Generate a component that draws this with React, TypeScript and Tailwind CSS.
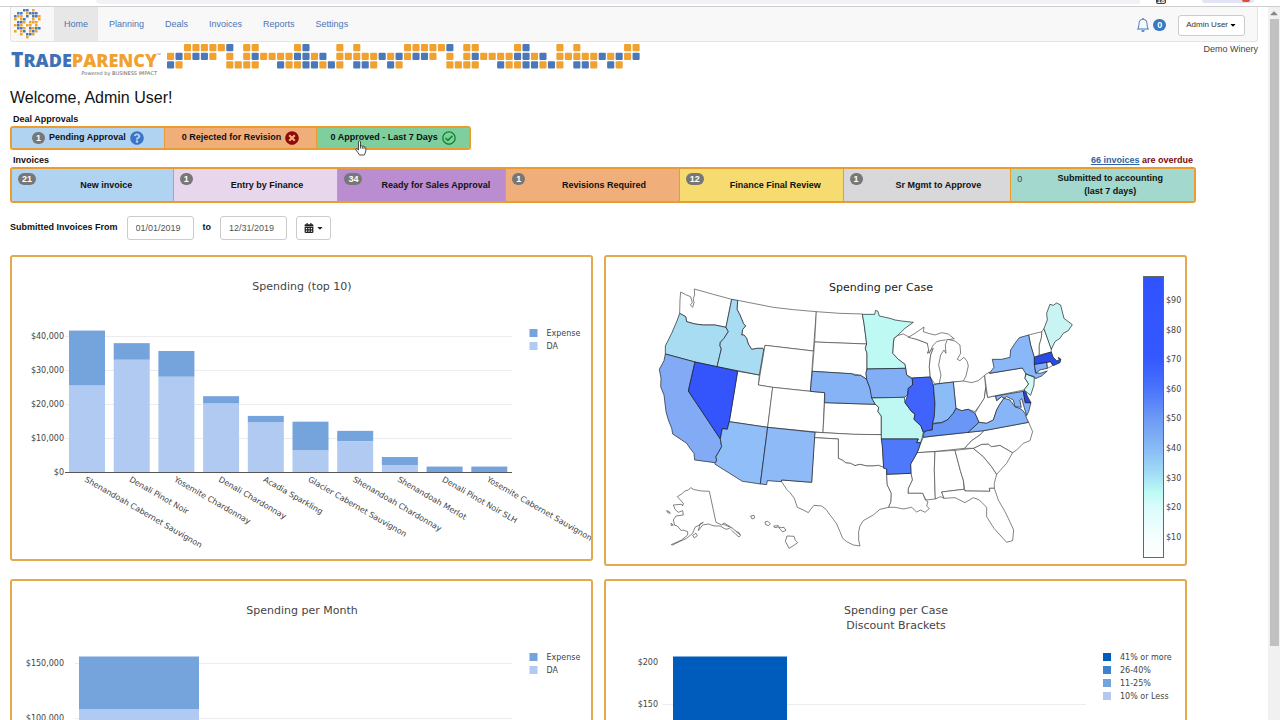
import { useState } from "react";
import { BsBell } from "react-icons/bs";
import {
  FaCalendarAlt,
  FaCaretDown,
  FaCaretUp,
  FaQuestionCircle,
  FaRegCheckCircle,
  FaTimesCircle,
} from "react-icons/fa";

const ORANGE = "#f0a12f";
const BLUE = "#4a78b8";
const EXPENSE = "#75a4dc";
const DA = "#b0caf1";

const navItems = ["Home", "Planning", "Deals", "Invoices", "Reports", "Settings"];

const bannerRows = [
  "..OOOOOB.OO....OB...O.O.....OOOOOB.OO....OB...O.O.....OO",
  "OBOBBO.O.OBOOOOBBOB.OOOOOBOBOBBO.O.OBOOOOBBOB.OOOOOBOBOB",
  "BO.....OOOO..BOOBBOBO.BBO.BO.....OOOO..BOOBBOBO.BBO.BO..",
];

const markRows = [
  "...BB.O..",
  ".BB.OBBB.",
  "BOO.B.BBO",
  "O.OB..O.O",
  ".BBO.OOO.",
  "OBO.OO.O.",
  ".BBO.BOBB",
  "O.OB.OBO.",
  "..O.BBO..",
  "....O....",
];

const invoiceStages = [
  { count: 21, label: "New invoice", color: "bg-[#afd3f0]" },
  { count: 1, label: "Entry by Finance", color: "bg-[#e8d6ec]" },
  { count: 34, label: "Ready for Sales Approval", color: "bg-[#b98dd0]" },
  { count: 1, label: "Revisions Required", color: "bg-[#f0ae7b]" },
  { count: 12, label: "Finance Final Review", color: "bg-[#f5db70]" },
  { count: 1, label: "Sr Mgmt to Approve", color: "bg-[#d8d8db]" },
  { count: 0, label: "Submitted to accounting\n(last 7 days)", color: "bg-[#a2d8cd]" },
];

const topSpending = [
  { name: "Shenandoah Cabernet Sauvignon", total: 41600, da: 25400 },
  { name: "Denali Pinot Noir", total: 37900, da: 33000 },
  { name: "Yosemite Chardonnay", total: 35600, da: 28000 },
  { name: "Denali Chardonnay", total: 22300, da: 20100 },
  { name: "Acadia Sparkling", total: 16500, da: 14700 },
  { name: "Glacier Cabernet Sauvignon", total: 14800, da: 6300 },
  { name: "Shenandoah Chardonnay", total: 12100, da: 9000 },
  { name: "Shenandoah Merlot", total: 4400, da: 1900 },
  { name: "Denali Pinot Noir SLH", total: 1600, da: 0 },
  { name: "Yosemite Cabernet Sauvignon", total: 1600, da: 0 },
];

interface StateShape {
  id: string;
  d: string;
  fill?: string;
}

const westStates: StateShape[] = [
  { id: "WA", d: "M122,66 L120,90 119,130 137,140 140,155 165,162 190,165 225,165 258,172 275,88 220,73 163,57 164,75 160,85 162,98 158,112 151,105 157,98 152,80 137,74Z" },
  { id: "MT", d: "M293,91 L400,112 460,119 529,125 520,243 375,226 371,240 368,235 352,235 335,238 325,222 320,205 312,195 305,195 308,178 317,168 310,160 300,135 291,118Z" },
  { id: "WY", d: "M375,226 L520,243 511,364 398,352 355,345Z" },
  { id: "UT", d: "M293,304 L358,315 355,345 398,352 383,472 268,455Z" },
  { id: "CO", d: "M398,352 L511,364 554,368 549,488 383,472Z" },
  { id: "ND", d: "M529,125 L600,130 667,132 672,160 676,190 680,222 600,219 524,216Z" },
  { id: "SD", d: "M524,216 L600,219 680,222 676,235 681,250 681,295 678,310 680,328 662,316 640,312 600,309 517,304Z" },
  { id: "KS", d: "M554,398 L640,401 706,403 716,412 714,425 724,438 724,494 640,493 549,488Z" },
  { id: "OK", d: "M525,487 L549,488 640,493 724,494 727,520 731,592 715,586 700,588 680,588 660,583 645,587 632,580 618,579 608,571 595,565 595,507 523,503Z" },
  { id: "TX", d: "M523,503 L595,507 595,565 608,571 618,579 632,580 645,587 660,583 680,588 700,588 715,586 731,592 740,597 740,612 742,645 754,670 753,695 746,712 720,718 700,735 670,752 660,768 656,785 656,810 660,828 640,825 620,815 608,805 600,785 590,762 580,748 570,735 558,718 545,708 522,706 512,718 505,728 490,720 472,712 463,685 450,668 440,658 425,635 425,630 515,637Z" },
  { id: "OR", fill: "#a8dcf3", d: "M119,130 L137,140 140,155 165,162 190,165 225,165 258,172 265,185 252,205 241,217 240,227 244,237 231,290 165,276 76,252 76,228 95,190 112,150Z" },
  { id: "ID", fill: "#a8dcf3", d: "M275,88 L293,91 291,118 300,135 310,160 317,168 308,178 305,195 312,195 320,205 325,222 335,238 352,235 368,235 371,240 358,315 231,290 244,237 240,227 241,217 252,205 265,185 258,172Z" },
  { id: "CA", fill: "#83abf5", d: "M76,252 L165,276 145,363 241,507 245,530 235,548 228,560 230,572 224,578 164,570 162,550 150,535 140,520 125,510 98,492 95,475 85,450 78,425 72,375 62,350 63,325 58,298 72,272Z" },
  { id: "NV", fill: "#3355fb", d: "M165,276 L231,290 293,304 268,455 262,478 247,476 241,507 145,363Z" },
  { id: "AZ", fill: "#90bef8", d: "M268,455 L383,472 361,642 307,634 224,582 230,572 228,560 235,548 245,530 241,507 247,476 262,478Z" },
  { id: "NM", fill: "#8fbaf8", d: "M383,472 L525,487 515,637 425,630 424,635 382,632 380,644 361,642Z" },
  { id: "NE", fill: "#85b3f6", d: "M517,304 L600,309 635,311 645,316 662,316 680,328 690,355 697,385 706,403 640,401 554,398 554,368 511,364Z" },
];

const eastStates: StateShape[] = [
  { id: "WI", d: "M172,197 L190,192 205,200 230,208 262,220 268,235 262,250 280,235 272,255 268,290 271,321 217,324 200,315 197,295 195,283 175,268 158,250 160,220 162,205Z" },
  { id: "MI-U", d: "M205,202 L225,190 252,171 250,185 265,190 285,195 305,188 325,192 332,198 343,206 320,210 305,211 290,215 278,228 268,250 262,220 230,208Z" },
  { id: "MI-L", d: "M322,208 L345,213 360,225 362,250 352,268 360,272 372,262 382,275 385,288 378,318 370,334 340,336 285,342 276,330 271,321 268,290 272,255 280,235 M298,340 L303,315 296,285 302,255 312,240 318,250 316,225 322,208" },
  { id: "OH", d: "M340,336 L370,333 395,338 415,332 434,316 437,355 433,385 420,405 405,425 385,418 365,422 348,415Z" },
  { id: "WV", d: "M437,355 L443,382 467,378 470,392 485,380 492,385 478,405 470,420 460,450 440,460 417,457 405,430 420,405 433,385Z" },
  { id: "PA", d: "M434,316 L448,306 450,310 547,294 558,305 555,325 566,342 552,360 443,382Z" },
  { id: "VT", d: "M566,195 L606,185 604,205 598,225 598,255 583,262 572,225Z" },
  { id: "NH", d: "M606,185 L612,176 634,235 634,246 598,255 598,225 604,205Z" },
  { id: "RI", d: "M620,277 L632,275 638,287 622,295Z" },
  { id: "TN", d: "M250,502 L385,487 432,482 420,495 395,512 374,535 280,545 232,548 242,520Z" },
  { id: "MS", d: "M232,548 L285,545 283,600 286,687 258,690 248,670 204,670 205,655 217,630 213,610 212,582 225,560Z" },
  { id: "AL", d: "M285,545 L345,541 362,605 370,630 372,658 305,666 312,685 302,680 286,687 283,600Z" },
  { id: "GA", d: "M345,541 L400,535 430,560 455,590 470,613 463,640 463,655 448,655 450,664 375,663 370,630 362,605Z" },
  { id: "FL", d: "M305,666 L372,658 375,663 450,664 448,655 463,655 475,690 495,725 505,745 521,780 518,812 500,817 480,795 462,775 440,740 440,712 418,690 400,683 375,698 345,683 312,685Z" },
  { id: "SC", d: "M400,535 L425,523 445,522 455,530 480,526 518,548 500,580 470,613 455,590 430,560Z" },
  { id: "NC", d: "M432,482 L566,457 578,485 570,512 550,520 530,540 518,548 480,526 455,530 445,522 425,523 400,535 374,535 395,512 420,495Z" },
  { id: "LA", d: "M140,613 L213,610 217,630 205,655 204,670 248,670 256,690 264,695 260,708 268,716 255,727 242,720 230,726 215,712 190,717 165,712 146,712 153,695 154,670 142,645Z" },
  { id: "MN", fill: "#bff9f3", d: "M67,133 L104,133 107,121 114,124 118,138 150,145 165,150 185,153 220,157 195,175 172,197 162,205 160,220 158,250 175,268 195,283 197,295 81,297 81,250 76,235 80,222 76,190 72,160Z" },
  { id: "IA", fill: "#82aef5", d: "M81,297 L197,295 200,315 217,327 218,345 205,355 203,375 193,382 95,384 90,355 80,328 78,310Z" },
  { id: "MO", fill: "#bff8f3", d: "M95,384 L193,382 195,398 215,425 225,432 222,448 243,468 250,487 247,502 242,518 230,518 235,507 124,507 124,438 114,425 116,412 106,403Z" },
  { id: "AR", fill: "#4f79fb", d: "M124,507 L235,507 230,518 242,518 235,540 225,560 212,582 213,610 140,613 140,597 131,595 127,530Z" },
  { id: "IL", fill: "#3f63fb", d: "M217,324 L271,321 280,345 285,400 283,440 278,462 277,480 262,482 250,487 243,468 222,448 225,432 215,425 195,398 203,375 205,355 218,345Z" },
  { id: "IN", fill: "#8cbcf8", d: "M280,345 L290,342 340,336 348,415 340,430 322,450 305,458 278,460 283,440 285,400Z" },
  { id: "KY", fill: "#6a97f7", d: "M278,462 L305,458 322,450 340,430 348,415 365,422 385,418 405,430 417,457 385,487 280,498 250,502 252,487 262,482 277,480Z" },
  { id: "VA", fill: "#88b5f7", d: "M385,487 L417,457 440,460 460,450 470,420 478,405 492,385 510,390 525,410 545,418 555,430 560,445 566,457 432,482Z" },
  { id: "MD", fill: "#86b2f6", d: "M467,378 L550,364 556,398 573,398 566,425 560,437 552,410 545,385 540,392 544,412 525,410 520,390 500,380 492,385 485,380 470,392Z" },
  { id: "DE", fill: "#2d45e0", d: "M550,364 L556,360 562,378 573,398 556,398Z" },
  { id: "NJ", fill: "#d3f9f7", d: "M558,312 L583,322 582,345 572,376 562,368 552,360 566,342 555,325Z" },
  { id: "NY", fill: "#89b7f7", d: "M448,310 L462,292 457,268 485,268 510,262 512,240 525,220 538,203 566,195 572,225 583,262 586,308 600,310 622,303 605,318 586,326 583,320 558,312 547,294Z" },
  { id: "CT", fill: "#82aef5", d: "M583,283 L620,277 622,295 600,300 588,310Z" },
  { id: "MA", fill: "#2b4be8", d: "M583,262 L634,246 640,262 650,272 658,270 655,262 663,268 660,278 640,287 632,275 583,283Z" },
  { id: "ME", fill: "#c8f5f3", d: "M612,176 L622,150 620,130 630,103 640,106 650,99 662,105 672,145 697,164 685,182 670,190 660,205 645,215 634,238Z" },
];

const islands = [
  "M152,653 L162,659 185,663 208,664 228,757 245,765 253,759 270,770 285,783 297,788 302,796 297,801 287,793 270,775 258,778 240,768 222,768 205,762 188,765 175,782 180,762 190,757 178,765 165,772 158,790 140,805 118,815 98,825 94,824 125,810 143,795 143,785 128,780 125,783 112,768 104,766 100,750 108,738 130,735 128,722 115,727 105,718 100,705 125,703 128,708 130,700 112,680 125,672 135,663 145,660Z",
  "M248,762 L262,768 278,775 300,795",
  "M80,722 L88,725 91,730 83,728Z",
  "M93,760 L100,765 94,767Z",
  "M158,796 L168,790 172,797 163,804Z",
  "M332,738 L342,736 344,744 336,747Z",
  "M375,756 L383,754 391,761 386,767 377,764Z",
  "M401,768 L415,767 412,772 404,773Z",
  "M415,771 L425,773 432,772 438,781 428,786 422,779Z",
  "M441,798 L462,799 466,811 473,818 462,826 447,835 442,825 436,814Z",
];

const caseTicks = [90, 80, 70, 60, 50, 40, 30, 20, 10];

function Squares({ rows, pitch, size }: { rows: string[]; pitch: number; size: number }) {
  return (
    <>
      {rows.map((row, r) =>
        row.split("").map((cell, c) =>
          cell === "." ? null : (
            <rect
              key={`${r}-${c}`}
              x={c * pitch}
              y={r * pitch}
              width={size}
              height={size}
              rx={size / 7}
              fill={cell === "O" ? ORANGE : BLUE}
            />
          )
        )
      )}
    </>
  );
}

function Badge({ children }: { children: React.ReactNode }) {
  return (
    <span className="inline-block h-3 rounded-full bg-[#777] px-1 text-[9px] leading-3 font-bold text-white">
      {children}
    </span>
  );
}

function ChartCard({ children }: { children: React.ReactNode }) {
  return <section className="rounded-[3px] border-2 border-[#e3a94d] bg-white">{children}</section>;
}

function ChartTitle({ x = 290, y = 33, children }: { x?: number; y?: number; children: React.ReactNode }) {
  return (
    <text x={x} y={y} textAnchor="middle" fontSize="11" fill="#444">
      {children}
    </text>
  );
}

function Legend({ x, items }: { x: number; items: { label: string; color: string }[] }) {
  return (
    <>
      {items.map((item, i) => (
        <g key={item.label}>
          <rect x={x} y={72 + i * 13} width="8" height="8" fill={item.color} />
          <text x={x + 17} y={79 + i * 13} fontSize="8" fill="#444">
            {item.label}
          </text>
        </g>
      ))}
    </>
  );
}

const chartClass = "block h-auto w-full font-['DejaVu_Sans',Verdana,sans-serif]";

const spendLegend = [
  { label: "Expense", color: EXPENSE },
  { label: "DA", color: DA },
];

function TopSpendingChart() {
  const base = 215;
  const perDollar = 34 / 10000;
  return (
    <svg viewBox="0 0 579 302" className={chartClass} role="img" aria-label="Spending (top 10)">
      <ChartTitle>Spending (top 10)</ChartTitle>
      {[0, 10000, 20000, 30000, 40000].map((v) => (
        <g key={v}>
          <path
            d={`M53,${base + 0.5 - v * perDollar} H500`}
            stroke={v === 0 ? "#555" : "#ebebf0"}
            strokeWidth="1"
          />
          <text x="52" y={base + 3 - v * perDollar} textAnchor="end" fontSize="8" fill="#444">
            ${v.toLocaleString("en-US")}
          </text>
        </g>
      ))}
      {topSpending.map((bar, i) => {
        const x = 57 + i * 44.7;
        const top = base - bar.total * perDollar;
        const split = base - bar.da * perDollar;
        return (
          <g key={bar.name}>
            <rect x={x} y={top} width="36" height={split - top} fill={EXPENSE} />
            <rect x={x} y={split} width="36" height={base - split} fill={DA} />
            <text transform={`translate(${x + 15} 224) rotate(30)`} fontSize="8" fill="#444">
              {bar.name}
            </text>
          </g>
        );
      })}
      <Legend x={517.5} items={spendLegend} />
    </svg>
  );
}

function CaseMap() {
  const drawState = (s: StateShape) => (
    <path key={s.id} d={s.d} fill={s.fill ?? "#fff"} stroke={s.fill ? "#15181f" : "#444"} />
  );
  return (
    <svg viewBox="0 0 579 307" className={chartClass} role="img" aria-label="Spending per Case">
      <defs>
        <linearGradient id="caseScale" x1="0" y1="0" x2="0" y2="1">
          <stop offset="0" stopColor="#3053ff" />
          <stop offset="0.29" stopColor="#3458ff" />
          <stop offset="0.4" stopColor="#4a74fb" />
          <stop offset="0.5" stopColor="#6c98f5" />
          <stop offset="0.61" stopColor="#87baf6" />
          <stop offset="0.71" stopColor="#a5e0f5" />
          <stop offset="0.77" stopColor="#bdfbf5" />
          <stop offset="0.82" stopColor="#d9fcfa" />
          <stop offset="0.93" stopColor="#f6fefe" />
          <stop offset="1" stopColor="#fff" />
        </linearGradient>
      </defs>
      <g transform="translate(34 13) scale(0.3333)" strokeWidth="2" strokeLinejoin="round">
        {westStates.map(drawState)}
        <g transform="translate(600 0)">{eastStates.map(drawState)}</g>
        {islands.map((d) => (
          <path key={d} d={d} fill="#fff" stroke="#444" />
        ))}
      </g>
      <text x="275" y="34" textAnchor="middle" fontSize="11" fill="#222">
        Spending per Case
      </text>
      <rect x="537.5" y="19.5" width="20" height="281" fill="url(#caseScale)" stroke="#666" />
      {caseTicks.map((v, i) => (
        <text key={v} x="560" y={46 + i * 29.6} fontSize="8" fill="#444">
          ${v}
        </text>
      ))}
    </svg>
  );
}

function MonthlyChart() {
  return (
    <svg viewBox="0 0 579 302" className={chartClass} role="img" aria-label="Spending per Month">
      <ChartTitle>Spending per Month</ChartTitle>
      {[150000, 100000, 50000, 0].map((v, i) => (
        <g key={v}>
          <path d={`M63,${82.5 + i * 55} H500`} stroke="#ebebf0" />
          <text x="52" y={85 + i * 55} textAnchor="end" fontSize="8" fill="#444">
            ${v.toLocaleString("en-US")}
          </text>
        </g>
      ))}
      <rect x="67" y="75.5" width="120" height="52.5" fill={EXPENSE} />
      <rect x="67" y="128" width="120" height="119" fill={DA} />
      <Legend x={517.5} items={spendLegend} />
    </svg>
  );
}

function BracketChart() {
  return (
    <svg viewBox="0 0 579 307" className={chartClass} role="img" aria-label="Spending per Case Discount Brackets">
      <ChartTitle>Spending per Case</ChartTitle>
      <ChartTitle y={48}>Discount Brackets</ChartTitle>
      {[200, 150, 100, 50, 0].map((v, i) => (
        <g key={v}>
          {v < 200 && <path d={`M57,${81.5 + i * 42} H480`} stroke="#ebebf0" />}
          <text x="52" y={84 + i * 42} textAnchor="end" fontSize="8" fill="#444">
            ${v}
          </text>
        </g>
      ))}
      <rect x="67" y="75.5" width="114" height="174" fill="#005cbc" />
      <Legend
        x={497}
        items={[
          { label: "41% or more", color: "#005cbc" },
          { label: "26-40%", color: "#3b82cf" },
          { label: "11-25%", color: "#75a4dc" },
          { label: "10% or Less", color: "#b5c9f0" },
        ]}
      />
    </svg>
  );
}

function Navbar() {
  return (
    <nav className="flex h-[35px] items-stretch rounded-b-[3px] border-x border-b border-[#e4e4e4] bg-[#f8f8f8]">
      <a href="#" aria-label="Tradeparency" className="flex w-[43px] items-center pl-[3px]">
        <svg viewBox="0 0 27 30" className="h-[30px] w-[27px]">
          <Squares rows={markRows} pitch={3} size={2.6} />
        </svg>
      </a>
      <div className="flex gap-px">
        {navItems.map((item) => (
          <a
            key={item}
            href="#"
            className={`flex items-center px-[10px] pt-0.5 text-[9px] text-[#4a76b5] ${item === "Home" ? "bg-[#e7e7e7]" : ""}`}
          >
            {item}
          </a>
        ))}
      </div>
      <div className="ml-auto flex items-center pt-0.5 pr-3">
        <a href="#" aria-label="Notifications" className="flex items-center gap-[3px]">
          <BsBell className="h-[14px] w-[14px] text-[#3a76c0]" />
          <span className="h-3 rounded-full bg-[#3a78c2] px-1 text-[9px] leading-3 font-bold text-white">0</span>
        </a>
        <button className="ml-3 flex h-[21px] items-center gap-px rounded-[3px] border border-[#ccc] bg-white px-[7px] text-[8px] text-[#333]">
          Admin User
          <FaCaretDown className="h-2 w-2 text-black" />
        </button>
      </div>
    </nav>
  );
}

export default function App() {
  const [from, setFrom] = useState("01/01/2019");
  const [to, setTo] = useState("12/31/2019");
  const dateClass =
    "h-6 w-[67px] rounded-[3px] border border-[#ccc] bg-white px-2 text-[9px] font-normal text-[#555]";

  return (
    <div className="relative flex h-screen flex-col overflow-hidden bg-white font-['Liberation_Sans',Arial,sans-serif] text-[#111]">
      <header className="flex h-[7px] shrink-0 items-start border-b border-[#cfcfcf] bg-white pl-24">
        <div className="h-1 flex-1 rounded-bl bg-[#f1f2f5]" />
        <div className="mr-9 ml-4 h-1 w-[10px] overflow-hidden rounded-b-[2px] bg-[#444] text-center text-[7px] leading-[1px] font-bold text-white">
          18
        </div>
        <div className="mr-[26px] flex h-[3px] w-[52px] justify-end rounded-b-full bg-[#e2e3f5] pr-1">
          <div className="h-[2px] w-2 rounded-b-full bg-[#e2502b]" />
        </div>
      </header>

      <div className="flex min-h-0 flex-1">
        <main className="min-w-0 flex-1 overflow-hidden px-[10px]">
          <Navbar />

          <div className="flex h-11 items-start justify-between">
            <div className="flex items-start">
              <div className="w-[157px] pt-[7px] pl-px font-['Open_Sans',sans-serif] leading-none whitespace-nowrap">
                <div className="flex items-baseline text-[18px] leading-[20px] font-extrabold">
                  <span className="text-[21px] text-[#3f72b5]">T</span>
                  <span className="text-[#3f72b5]">RADE</span>
                  <span className="text-[#f0a12f]">PARENCY</span>
                  <span className="self-start text-[5px] leading-[12px] font-normal text-[#888]">™</span>
                </div>
                <div className="pr-[10px] text-right font-['DejaVu_Sans',sans-serif] text-[5px] leading-[7px] text-[#666]">
                  Powered by BUSINESS IMPACT
                </div>
              </div>
              <svg viewBox="0 0 56 3" className="mt-[2px] h-[26px] w-[474px]" preserveAspectRatio="none">
                <Squares rows={bannerRows} pitch={1} size={0.84} />
              </svg>
            </div>
            <span className="text-[9px] leading-[14px] text-[#444]">Demo Winery</span>
          </div>

          <h1 className="h-[26px] text-[16px] leading-6">Welcome, Admin User!</h1>

          <h2 className="pl-[3px] text-[9px] leading-[14px] font-bold">Deal Approvals</h2>
          <div className="flex h-6 w-[461px] divide-x divide-[#eb9c2e] overflow-hidden rounded-[3px] border-2 border-[#eb9c2e] text-[9px] font-bold">
            <button className="flex flex-1 items-center justify-center gap-1 bg-[#afd3f0]">
              <Badge>1</Badge>
              Pending Approval
              <FaQuestionCircle className="h-[14px] w-[14px] text-[#3c74c9]" />
            </button>
            <button className="flex flex-1 items-center justify-center gap-1 bg-[#f0ae7b]">
              0 Rejected for Revision
              <FaTimesCircle className="h-[14px] w-[14px] text-[#8c0a0a]" />
            </button>
            <button className="flex flex-1 items-center justify-center gap-1 bg-[#7fce9e]">
              0 Approved - Last 7 Days
              <FaRegCheckCircle className="h-[14px] w-[14px] text-[#0d8428]" />
            </button>
          </div>

          <div className="mr-[62px]">
            <div className="mt-[3px] flex justify-between px-[3px] text-[9px] leading-[14px] font-bold">
              <h2>Invoices</h2>
              <p className="text-[#7a0c0c]">
                <a href="#" className="text-[#2f62a3] underline">
                  66 invoices
                </a>{" "}
                are overdue
              </p>
            </div>
            <div className="grid h-9 grid-cols-[162fr_165fr_168fr_174fr_164fr_168fr_183fr] divide-x divide-[#eb9c2e] overflow-hidden rounded-[3px] border-2 border-[#eb9c2e]">
              {invoiceStages.map((stage) => (
                <button key={stage.label} className={`flex items-start pl-[6px] text-[9px] ${stage.color}`}>
                  <span className="pt-1 leading-3">
                    {stage.count > 0 ? <Badge>{stage.count}</Badge> : <span className="text-[#444]">0</span>}
                  </span>
                  <span className="flex h-full flex-1 items-center justify-center pl-1 text-center leading-[13px] font-bold whitespace-pre-line">
                    {stage.label}
                  </span>
                </button>
              ))}
            </div>
          </div>

          <div className="mt-[13px] flex items-center gap-[9px] text-[9px] font-bold">
            <label htmlFor="from">Submitted Invoices From</label>
            <input id="from" className={dateClass} value={from} onChange={(e) => setFrom(e.target.value)} />
            <label htmlFor="to">to</label>
            <input id="to" className={dateClass} value={to} onChange={(e) => setTo(e.target.value)} />
            <button
              aria-label="Pick date range"
              className="flex h-6 w-[35px] items-center justify-center gap-0.5 rounded-[3px] border border-[#ccc] bg-white text-[#222]"
            >
              <FaCalendarAlt className="h-[10px] w-[10px]" />
              <FaCaretDown className="h-2 w-2" />
            </button>
          </div>

          <div className="mt-[15px] mr-[71px] grid grid-cols-2 items-start gap-x-[11px] gap-y-[13px]">
            <ChartCard>
              <TopSpendingChart />
            </ChartCard>
            <ChartCard>
              <CaseMap />
            </ChartCard>
            <ChartCard>
              <MonthlyChart />
            </ChartCard>
            <ChartCard>
              <BracketChart />
            </ChartCard>
          </div>
        </main>

        <div className="flex w-3 shrink-0 flex-col items-center bg-[#f1f1f1]" aria-hidden="true">
          <FaCaretUp className="h-3 w-2 text-[#888]" />
          <div className="h-[88%] w-[9px] bg-[#c1c1c1]" />
        </div>
      </div>

      <svg viewBox="0 0 12 16" className="absolute top-[140px] left-[355px] h-4 w-3" aria-hidden="true">
        <path
          d="M3.5 1.5 Q4.5 0.3 5.5 1.5 V6 Q6.5 5.3 7.3 6.3 Q8.3 5.7 9 6.8 Q10.3 6.4 10.8 7.6 V11 Q10.5 13 9.3 15 H4.5 Q3 12.5 0.8 9.8 Q0.5 8.5 2 8.6 L3.5 10Z M5.5 6 V8.5 M7.3 6.5 V8.8 M9 7 V9"
          fill="#fff"
          stroke="#222"
          strokeWidth="0.8"
        />
      </svg>
    </div>
  );
}
